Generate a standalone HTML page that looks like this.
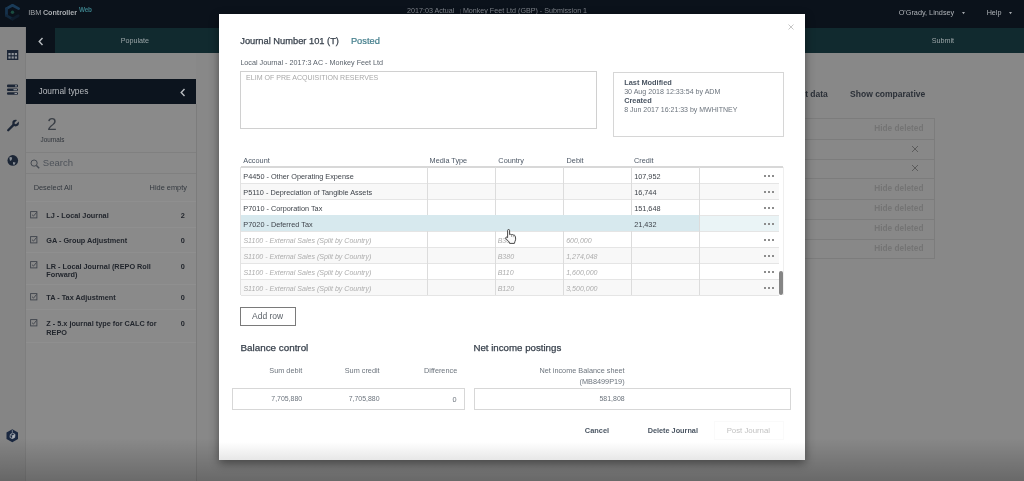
<!DOCTYPE html>
<html><head><meta charset="utf-8">
<style>
*{margin:0;padding:0;box-sizing:border-box}
#w{position:absolute;left:-6px;top:-6px;width:1036px;height:493px;background:#888888;will-change:transform}
#c{position:absolute;left:6px;top:6px;width:1024px;height:481px}
html,body{width:1024px;height:481px;overflow:hidden}
body{position:relative;background:#888888;font-family:"Liberation Sans",sans-serif}
.a{position:absolute}
.t{position:absolute;white-space:nowrap;line-height:1}
</style></head><body><div id="w"><div id="c">
<div class="a" style="left:-6px;top:-6px;width:1036px;height:33.6px;background:#0b121b"></div>
<div class="a" style="left:55px;top:27.6px;width:975px;height:25.2px;background:#112a2f"></div>
<div class="a" style="left:26px;top:27.6px;width:29px;height:25.2px;background:#0b121b"></div>
<div class="a" style="left:-6px;top:27px;width:31px;height:460px;background:#858585"></div>
<div class="a" style="left:24.5px;top:27px;width:1px;height:460px;background:#7e7e7e"></div>
<div class="a" style="left:25.5px;top:52.8px;width:170.5px;height:434.2px;background:#8a8a8a"></div>
<div class="a" style="left:195.5px;top:104px;width:1px;height:383px;background:#7c7c7c"></div>
<svg class="a" style="left:4px;top:4px" width="18" height="18" viewBox="0 0 18 18">
  <g fill="none" stroke-width="2.8" stroke-linejoin="round" stroke-linecap="round">
   <polyline points="2.5,4.6 8.5,1.2 14.6,4.6" stroke="#1a3b58"/>
   <polyline points="2.5,4.6 2.5,11.6" stroke="#16324c"/>
   <polyline points="2.5,11.6 8.5,15" stroke="#12283c"/>
   <polyline points="8.5,15 14.2,11.8" stroke="#0f1d2c"/>
  </g>
  <circle cx="8.5" cy="8.3" r="1.7" fill="#1b4c40"/>
</svg>
<div class="t" style="left:28.17px;top:8.81px;font-size:7.4px;color:#a3a6aa;font-weight:400;">IBM<b style='font-size:7.16px;margin-left:1.6px;color:#aaadb1'>Controller</b></div>
<div class="t" style="left:79.11px;top:6.86px;font-size:6.4px;color:#3a7c86;font-weight:700;letter-spacing:-0.3px">Web</div>
<div class="t" style="left:407.08px;top:8.12px;font-size:7.15px;color:#80858c;font-weight:400;">2017:03 Actual</div>
<div class="a" style="left:459.8px;top:8.5px;width:0.6px;height:7px;background:#2a3038"></div>
<div class="t" style="left:462.88px;top:8.12px;font-size:7.15px;color:#80858c;font-weight:400;">Monkey Feet Ltd (GBP) - Submission 1</div>
<div class="t" style="left:898.67px;top:8.70px;font-size:7.3px;color:#aeb2b7;font-weight:400;">O'Grady, Lindsey</div>
<div class="t" style="left:986.68px;top:8.78px;font-size:7.2px;color:#aeb2b7;font-weight:400;">Help</div>
<svg class="a" style="left:962px;top:11.5px" width="3" height="3" viewBox="0 0 3 3"><polygon points="0,0 3,0 1.5,2.2" fill="#a4a8ad"/></svg>
<svg class="a" style="left:1008.5px;top:11.5px" width="3" height="3" viewBox="0 0 3 3"><polygon points="0,0 3,0 1.5,2.2" fill="#a4a8ad"/></svg>
<svg class="a" style="left:37px;top:36.5px" width="8" height="9" viewBox="0 0 8 9"><polyline points="5.5,1 2.2,4.5 5.5,8" fill="none" stroke="#b8bcc0" stroke-width="1.4"/></svg>
<div class="t" style="left:120.68px;top:37.48px;font-size:7.2px;color:#9ba4a7;font-weight:400;">Populate</div>
<div class="t" style="left:931.68px;top:37.38px;font-size:7.2px;color:#9ba4a7;font-weight:400;">Submit</div>
<svg class="a" style="left:7px;top:50px" width="12" height="10" viewBox="0 0 12 10">
  <rect x="0" y="0" width="11.3" height="10" fill="#1c2636"/>
  <g fill="#8f949a">
   <rect x="1.4" y="3" width="2.2" height="2.2"/><rect x="4.6" y="3" width="2.2" height="2.2"/><rect x="7.8" y="3" width="2.2" height="2.2"/>
   <rect x="1.4" y="6.4" width="2.2" height="2.2"/><rect x="4.6" y="6.4" width="2.2" height="2.2"/><rect x="7.8" y="6.4" width="2.2" height="2.2"/>
  </g>
</svg>
<svg class="a" style="left:7px;top:84px" width="12" height="12" viewBox="0 0 12 12">
  <g fill="#1c2636"><rect x="0" y="0.6" width="11" height="2.6" rx="1"/><rect x="0" y="4.4" width="11" height="2.6" rx="1"/><rect x="0" y="8.2" width="11" height="2.6" rx="1"/></g>
  <g fill="#8f949a"><rect x="8" y="1.3" width="2" height="1.2"/><rect x="6.5" y="5.1" width="3.5" height="1.2"/><rect x="7.5" y="8.9" width="2.5" height="1.2"/></g>
</svg>
<svg class="a" style="left:6px;top:119px" width="14" height="13" viewBox="0 0 14 13">
  <path d="M2.2,11.2 L8,5.4" stroke="#1c2636" stroke-width="2.3" stroke-linecap="round"/>
  <circle cx="9.6" cy="4.1" r="3.3" fill="#1c2636"/>
  <path d="M9.7,4 L13.2,0.5" stroke="#858585" stroke-width="2.3" stroke-linecap="round"/>
</svg>
<svg class="a" style="left:7px;top:155px" width="12" height="12" viewBox="0 0 12 12">
  <circle cx="5.8" cy="5.4" r="5.3" fill="#1c2636"/>
  <path d="M2.3,2.6 Q4,1.3 5.2,2.8 L4.6,5 L3,6 Z" fill="#848a92"/>
  <path d="M6,7 L8.6,7.4 L7.6,9.8 L6,9.4 Z" fill="#848a92"/>
</svg>
<svg class="a" style="left:6.4px;top:428.7px" width="13" height="14" viewBox="0 0 13 14">
  <polygon points="6.3,0.2 12,3.4 12,10 6.3,13.2 0.5,10 0.5,3.4" fill="#1a2840"/>
  <path d="M6.3,1.2 L6.3,3.6" stroke="#9aa0a8" stroke-width="0.8"/>
  <polygon points="6.6,4.2 9,5.4 8.6,8.6 6.2,9.6 4,8.4 4.4,5.4" fill="none" stroke="#9aa0a8" stroke-width="0.9"/>
  <path d="M4.4,5.4 L6.6,6.6 L9,5.4 M6.6,6.6 L6.2,9.6" stroke="#9aa0a8" stroke-width="0.7" fill="none"/>
  <path d="M6.6,6.6 L9,5.4 L8.6,8.6 L6.2,9.6 Z" fill="#b0b5bb"/>
</svg>
<div class="a" style="left:26px;top:79px;width:170px;height:25px;background:#0c141e"></div>
<div class="t" style="left:38.52px;top:86.86px;font-size:8.4px;color:#b7babe;font-weight:400;">Journal types</div>
<svg class="a" style="left:179px;top:88px" width="8" height="9" viewBox="0 0 8 9"><polyline points="5.5,1 2.2,4.5 5.5,8" fill="none" stroke="#b8bcc0" stroke-width="1.4"/></svg>
<div class="t" style="left:47.23px;top:116.15px;font-size:17px;color:#3a3f46;font-weight:400;">2</div>
<div class="t" style="left:40.52px;top:137.05px;font-size:6.3px;color:#2f343b;font-weight:400;">Journals</div>
<div class="a" style="left:26px;top:152px;width:170px;height:1px;background:#808080"></div>
<svg class="a" style="left:30px;top:158.5px" width="11" height="11" viewBox="0 0 11 11"><circle cx="4.1" cy="4.1" r="3.1" fill="none" stroke="#454a52" stroke-width="1"/><path d="M6.4,6.4 L9.2,9.2" stroke="#454a52" stroke-width="1.4"/></svg>
<div class="t" style="left:42.87px;top:158.43px;font-size:9.5px;color:#4d5259;font-weight:400;">Search</div>
<div class="a" style="left:26px;top:173px;width:170px;height:1px;background:#808080"></div>
<div class="t" style="left:33.67px;top:183.71px;font-size:7.4px;color:#33383f;font-weight:400;">Deselect All</div>
<div class="t" style="left:149.57px;top:183.71px;font-size:7.4px;color:#33383f;font-weight:400;">Hide empty</div>
<div class="a" style="left:26px;top:201px;width:170px;height:1px;background:#8f8f8f"></div>
<div class="a" style="left:26px;top:227px;width:170px;height:1px;background:#8f8f8f"></div>
<div class="a" style="left:26px;top:252px;width:170px;height:1px;background:#8f8f8f"></div>
<div class="a" style="left:26px;top:284px;width:170px;height:1px;background:#8f8f8f"></div>
<div class="a" style="left:26px;top:309px;width:170px;height:1px;background:#8f8f8f"></div>
<div class="a" style="left:26px;top:342px;width:170px;height:1px;background:#8f8f8f"></div>
<svg class="a" style="left:29.5px;top:210.5px" width="8" height="8" viewBox="0 0 8 8"><rect x="0.6" y="0.6" width="6.3" height="6.3" fill="none" stroke="#3e434b" stroke-width="0.9"/><path d="M2,3.7 L3.5,5.1 L6.6,1.4" fill="none" stroke="#3e434b" stroke-width="0.9"/></svg>
<div class="t" style="left:46.27px;top:211.59px;font-size:7.3px;color:#22262d;font-weight:700;">LJ - Local Journal</div>
<div class="t" style="left:180.67px;top:211.59px;font-size:7.3px;color:#22262d;font-weight:700;">2</div>
<svg class="a" style="left:29.5px;top:235.89999999999998px" width="8" height="8" viewBox="0 0 8 8"><rect x="0.6" y="0.6" width="6.3" height="6.3" fill="none" stroke="#3e434b" stroke-width="0.9"/><path d="M2,3.7 L3.5,5.1 L6.6,1.4" fill="none" stroke="#3e434b" stroke-width="0.9"/></svg>
<div class="t" style="left:46.27px;top:236.99px;font-size:7.3px;color:#22262d;font-weight:700;">GA - Group Adjustment</div>
<div class="t" style="left:180.67px;top:236.99px;font-size:7.3px;color:#22262d;font-weight:700;">0</div>
<svg class="a" style="left:29.5px;top:261.4px" width="8" height="8" viewBox="0 0 8 8"><rect x="0.6" y="0.6" width="6.3" height="6.3" fill="none" stroke="#3e434b" stroke-width="0.9"/><path d="M2,3.7 L3.5,5.1 L6.6,1.4" fill="none" stroke="#3e434b" stroke-width="0.9"/></svg>
<div class="t" style="left:46.27px;top:262.50px;font-size:7.3px;color:#22262d;font-weight:700;">LR - Local Journal (REPO Roll</div>
<div class="t" style="left:46.27px;top:271.39px;font-size:7.3px;color:#22262d;font-weight:700;">Forward)</div>
<div class="t" style="left:180.67px;top:262.50px;font-size:7.3px;color:#22262d;font-weight:700;">0</div>
<svg class="a" style="left:29.5px;top:293.2px" width="8" height="8" viewBox="0 0 8 8"><rect x="0.6" y="0.6" width="6.3" height="6.3" fill="none" stroke="#3e434b" stroke-width="0.9"/><path d="M2,3.7 L3.5,5.1 L6.6,1.4" fill="none" stroke="#3e434b" stroke-width="0.9"/></svg>
<div class="t" style="left:46.27px;top:294.30px;font-size:7.3px;color:#22262d;font-weight:700;">TA - Tax Adjustment</div>
<div class="t" style="left:180.67px;top:294.30px;font-size:7.3px;color:#22262d;font-weight:700;">0</div>
<svg class="a" style="left:29.5px;top:319.0px" width="8" height="8" viewBox="0 0 8 8"><rect x="0.6" y="0.6" width="6.3" height="6.3" fill="none" stroke="#3e434b" stroke-width="0.9"/><path d="M2,3.7 L3.5,5.1 L6.6,1.4" fill="none" stroke="#3e434b" stroke-width="0.9"/></svg>
<div class="t" style="left:46.27px;top:320.10px;font-size:7.3px;color:#22262d;font-weight:700;">Z - 5.x journal type for CALC for</div>
<div class="t" style="left:46.27px;top:329.00px;font-size:7.3px;color:#22262d;font-weight:700;">REPO</div>
<div class="t" style="left:180.67px;top:320.10px;font-size:7.3px;color:#22262d;font-weight:700;">0</div>
<div class="t" style="left:0;width:827.80px;text-align:right;top:89.78px;font-size:8.5px;color:#2b3038;font-weight:700;">Import data</div>
<div class="t" style="left:850.12px;top:89.78px;font-size:8.5px;color:#2b3038;font-weight:700;">Show comparative</div>
<div class="a" style="left:760px;top:117.8px;width:175px;height:141.7px;border:1px solid #7c7c7c;box-sizing:border-box"></div>
<div class="a" style="left:760px;top:139px;width:175px;height:1px;background:#7c7c7c"></div>
<div class="a" style="left:760px;top:158.5px;width:175px;height:1px;background:#7c7c7c"></div>
<div class="a" style="left:760px;top:178px;width:175px;height:1px;background:#7c7c7c"></div>
<div class="a" style="left:760px;top:198.5px;width:175px;height:1px;background:#7c7c7c"></div>
<div class="a" style="left:760px;top:219px;width:175px;height:1px;background:#7c7c7c"></div>
<div class="a" style="left:760px;top:239px;width:175px;height:1px;background:#7c7c7c"></div>
<div class="t" style="left:874.23px;top:124.44px;font-size:8.3px;color:#747474;font-weight:700;">Hide deleted</div>
<div class="t" style="left:874.23px;top:183.94px;font-size:8.3px;color:#747474;font-weight:700;">Hide deleted</div>
<div class="t" style="left:874.23px;top:203.94px;font-size:8.3px;color:#747474;font-weight:700;">Hide deleted</div>
<div class="t" style="left:874.23px;top:223.94px;font-size:8.3px;color:#747474;font-weight:700;">Hide deleted</div>
<div class="t" style="left:874.23px;top:244.44px;font-size:8.3px;color:#747474;font-weight:700;">Hide deleted</div>
<svg class="a" style="left:910.5px;top:144.7px" width="8" height="8" viewBox="0 0 8 8"><path d="M1,1 L7,7 M7,1 L1,7" stroke="#505050" stroke-width="0.8"/></svg>
<svg class="a" style="left:910.5px;top:164.2px" width="8" height="8" viewBox="0 0 8 8"><path d="M1,1 L7,7 M7,1 L1,7" stroke="#505050" stroke-width="0.8"/></svg>
<div class="a" style="left:-6px;top:438px;width:1036px;height:43px;background:linear-gradient(to bottom,rgba(0,0,0,0),rgba(0,0,0,0.23))"></div>
<div class="a" style="left:-6px;top:481px;width:1036px;height:6px;background:rgba(0,0,0,0.23)"></div>
<div class="a" style="left:219px;top:14px;width:586px;height:446.2px;background:linear-gradient(to bottom,#ffffff 0,#ffffff 428px,#e7e7e7 100%);box-shadow:0 3px 9px rgba(0,0,0,0.45)"></div>
<svg class="a" style="left:788px;top:23.5px" width="6" height="6" viewBox="0 0 6 6"><path d="M0.5,0.5 L5.5,5.5 M5.5,0.5 L0.5,5.5" stroke="#c0c0c0" stroke-width="0.9"/></svg>
<div class="t" style="left:240.28px;top:37.49px;font-size:9.3px;color:#38414c;font-weight:400;-webkit-text-stroke:0.25px #38414c">Journal Number 101 (T)</div>
<div class="t" style="left:350.88px;top:37.49px;font-size:9.3px;color:#427d8b;font-weight:400;-webkit-text-stroke:0.2px #427d8b">Posted</div>
<div class="t" style="left:240.38px;top:58.58px;font-size:7.2px;color:#5b636c;font-weight:400;">Local Journal - 2017:3 AC - Monkey Feet Ltd</div>
<div class="a" style="left:240.1px;top:71.1px;width:357.2px;height:58.1px;border:1px solid #d0d0d0;box-sizing:border-box"></div>
<div class="t" style="left:246.08px;top:74.41px;font-size:7.05px;color:#a8a8a8;font-weight:400;">ELIM OF PRE ACQUISITION RESERVES</div>
<div class="a" style="left:613.1px;top:71.6px;width:170.8px;height:65px;border:1px solid #d6d6d6;box-sizing:border-box"></div>
<div class="t" style="left:624.17px;top:79.01px;font-size:7.4px;color:#4b5663;font-weight:700;">Last Modified</div>
<div class="t" style="left:624.18px;top:88.56px;font-size:7.1px;color:#6c747d;font-weight:400;">30 Aug 2018 12:33:54 by ADM</div>
<div class="t" style="left:624.17px;top:97.01px;font-size:7.4px;color:#4b5663;font-weight:700;">Created</div>
<div class="t" style="left:624.18px;top:106.25px;font-size:7.0px;color:#6c747d;font-weight:400;">8 Jun 2017 16:21:33 by MWHITNEY</div>
<div class="t" style="left:243.37px;top:156.69px;font-size:7.3px;color:#4d5866;font-weight:400;">Account</div>
<div class="t" style="left:429.57px;top:156.69px;font-size:7.3px;color:#4d5866;font-weight:400;">Media Type</div>
<div class="t" style="left:498.37px;top:156.69px;font-size:7.3px;color:#4d5866;font-weight:400;">Country</div>
<div class="t" style="left:566.57px;top:156.69px;font-size:7.3px;color:#4d5866;font-weight:400;">Debit</div>
<div class="t" style="left:634.07px;top:156.69px;font-size:7.3px;color:#4d5866;font-weight:400;">Credit</div>
<div class="a" style="left:240.7px;top:183.3px;width:538.3px;height:16px;background:#f8f8f8"></div>
<div class="a" style="left:240.7px;top:214.8px;width:458.8px;height:16.5px;background:#d7e9ee"></div>
<div class="a" style="left:699.5px;top:214.8px;width:79.5px;height:16.5px;background:#eaf4f6"></div>
<div class="a" style="left:240.7px;top:247.3px;width:538.3px;height:16px;background:#f8f8f8"></div>
<div class="a" style="left:240.7px;top:279.3px;width:538.3px;height:16px;background:#f8f8f8"></div>
<div class="a" style="left:240.7px;top:182.8px;width:538.3px;height:1px;background:#e5e5e5"></div>
<div class="a" style="left:240.7px;top:198.8px;width:538.3px;height:1px;background:#e5e5e5"></div>
<div class="a" style="left:240.7px;top:214.8px;width:538.3px;height:1px;background:#e5e5e5"></div>
<div class="a" style="left:240.7px;top:230.8px;width:538.3px;height:1px;background:#e5e5e5"></div>
<div class="a" style="left:240.7px;top:246.8px;width:538.3px;height:1px;background:#e5e5e5"></div>
<div class="a" style="left:240.7px;top:262.8px;width:538.3px;height:1px;background:#e5e5e5"></div>
<div class="a" style="left:240.7px;top:278.8px;width:538.3px;height:1px;background:#e5e5e5"></div>
<div class="a" style="left:240.7px;top:294.8px;width:538.3px;height:1px;background:#e5e5e5"></div>
<div class="a" style="left:240.7px;top:165.8px;width:542.8px;height:2px;background:#d8d8d8"></div>
<div class="a" style="left:426.5px;top:167.3px;width:1px;height:128px;background:#dcdcdc"></div>
<div class="a" style="left:494.5px;top:167.3px;width:1px;height:128px;background:#dcdcdc"></div>
<div class="a" style="left:563.0px;top:167.3px;width:1px;height:128px;background:#dcdcdc"></div>
<div class="a" style="left:631.0px;top:167.3px;width:1px;height:128px;background:#dcdcdc"></div>
<div class="a" style="left:699.0px;top:167.3px;width:1px;height:128px;background:#dcdcdc"></div>
<div class="a" style="left:240.2px;top:167.3px;width:1px;height:128px;background:#e2e2e2"></div>
<div class="a" style="left:782.8px;top:167.3px;width:1px;height:128px;background:#efefef"></div>
<div class="a" style="left:240.7px;top:215.3px;width:458.8px;height:15.5px;background:#d7e9ee"></div>
<div class="t" style="left:243.37px;top:172.59px;font-size:7.3px;color:#3f444b;font-weight:400;">P4450 - Other Operating Expense</div>
<div class="t" style="left:634.17px;top:172.59px;font-size:7.3px;color:#3f444b;font-weight:400;">107,952</div>
<div class="a" style="left:764px;top:175px;width:2px;height:2px;background:#8c8c8c"></div>
<div class="a" style="left:768px;top:175px;width:2px;height:2px;background:#8c8c8c"></div>
<div class="a" style="left:772px;top:175px;width:2px;height:2px;background:#8c8c8c"></div>
<div class="t" style="left:243.37px;top:188.59px;font-size:7.3px;color:#3f444b;font-weight:400;">P5110 - Depreciation of Tangible Assets</div>
<div class="t" style="left:634.17px;top:188.59px;font-size:7.3px;color:#3f444b;font-weight:400;">16,744</div>
<div class="a" style="left:764px;top:191px;width:2px;height:2px;background:#8c8c8c"></div>
<div class="a" style="left:768px;top:191px;width:2px;height:2px;background:#8c8c8c"></div>
<div class="a" style="left:772px;top:191px;width:2px;height:2px;background:#8c8c8c"></div>
<div class="t" style="left:243.37px;top:204.59px;font-size:7.3px;color:#3f444b;font-weight:400;">P7010 - Corporation Tax</div>
<div class="t" style="left:634.17px;top:204.59px;font-size:7.3px;color:#3f444b;font-weight:400;">151,648</div>
<div class="a" style="left:764px;top:207px;width:2px;height:2px;background:#8c8c8c"></div>
<div class="a" style="left:768px;top:207px;width:2px;height:2px;background:#8c8c8c"></div>
<div class="a" style="left:772px;top:207px;width:2px;height:2px;background:#8c8c8c"></div>
<div class="t" style="left:243.37px;top:220.59px;font-size:7.3px;color:#3f444b;font-weight:400;">P7020 - Deferred Tax</div>
<div class="t" style="left:634.17px;top:220.59px;font-size:7.3px;color:#3f444b;font-weight:400;">21,432</div>
<div class="a" style="left:764px;top:223px;width:2px;height:2px;background:#8c8c8c"></div>
<div class="a" style="left:768px;top:223px;width:2px;height:2px;background:#8c8c8c"></div>
<div class="a" style="left:772px;top:223px;width:2px;height:2px;background:#8c8c8c"></div>
<div class="t" style="left:243.38px;top:236.51px;font-size:7.05px;color:#adadad;font-weight:400;font-style:italic">S1100 - External Sales (Split by Country)</div>
<div class="t" style="left:497.68px;top:236.51px;font-size:7.05px;color:#adadad;font-weight:400;font-style:italic">B300</div>
<div class="t" style="left:566.18px;top:236.51px;font-size:7.05px;color:#adadad;font-weight:400;font-style:italic">600,000</div>
<div class="a" style="left:764px;top:239px;width:2px;height:2px;background:#8c8c8c"></div>
<div class="a" style="left:768px;top:239px;width:2px;height:2px;background:#8c8c8c"></div>
<div class="a" style="left:772px;top:239px;width:2px;height:2px;background:#8c8c8c"></div>
<div class="t" style="left:243.38px;top:252.51px;font-size:7.05px;color:#adadad;font-weight:400;font-style:italic">S1100 - External Sales (Split by Country)</div>
<div class="t" style="left:497.68px;top:252.51px;font-size:7.05px;color:#adadad;font-weight:400;font-style:italic">B380</div>
<div class="t" style="left:566.18px;top:252.51px;font-size:7.05px;color:#adadad;font-weight:400;font-style:italic">1,274,048</div>
<div class="a" style="left:764px;top:255px;width:2px;height:2px;background:#8c8c8c"></div>
<div class="a" style="left:768px;top:255px;width:2px;height:2px;background:#8c8c8c"></div>
<div class="a" style="left:772px;top:255px;width:2px;height:2px;background:#8c8c8c"></div>
<div class="t" style="left:243.38px;top:268.51px;font-size:7.05px;color:#adadad;font-weight:400;font-style:italic">S1100 - External Sales (Split by Country)</div>
<div class="t" style="left:497.68px;top:268.51px;font-size:7.05px;color:#adadad;font-weight:400;font-style:italic">B110</div>
<div class="t" style="left:566.18px;top:268.51px;font-size:7.05px;color:#adadad;font-weight:400;font-style:italic">1,600,000</div>
<div class="a" style="left:764px;top:271px;width:2px;height:2px;background:#8c8c8c"></div>
<div class="a" style="left:768px;top:271px;width:2px;height:2px;background:#8c8c8c"></div>
<div class="a" style="left:772px;top:271px;width:2px;height:2px;background:#8c8c8c"></div>
<div class="t" style="left:243.38px;top:284.51px;font-size:7.05px;color:#adadad;font-weight:400;font-style:italic">S1100 - External Sales (Split by Country)</div>
<div class="t" style="left:497.68px;top:284.51px;font-size:7.05px;color:#adadad;font-weight:400;font-style:italic">B120</div>
<div class="t" style="left:566.18px;top:284.51px;font-size:7.05px;color:#adadad;font-weight:400;font-style:italic">3,500,000</div>
<div class="a" style="left:764px;top:287px;width:2px;height:2px;background:#8c8c8c"></div>
<div class="a" style="left:768px;top:287px;width:2px;height:2px;background:#8c8c8c"></div>
<div class="a" style="left:772px;top:287px;width:2px;height:2px;background:#8c8c8c"></div>
<div class="a" style="left:779px;top:270.9px;width:4px;height:24.3px;border-radius:2px;background:#858585"></div>
<svg class="a" style="left:504px;top:229px" width="14" height="15" viewBox="0 0 14 15">
 <path d="M3.6,1.6 Q3.6,0.5 4.6,0.5 Q5.6,0.5 5.6,1.6 L5.6,5.6 Q6.6,5 7.5,5.6 Q8.5,5.2 9.3,6 Q10.3,5.8 11,6.7 L11.6,9 Q11.8,11 11,12.3 L10.4,14.4 L5.6,14.4 L5.2,13 L2,9.8 Q1.2,8.8 2,8.2 Q2.7,7.8 3.6,8.6 Z" fill="#fafafa" stroke="#333" stroke-width="0.9" stroke-linejoin="round"/>
 <path d="M7.5,5.8 L7.5,8 M9.3,6.2 L9.3,8.2" stroke="#666" stroke-width="0.5"/>
</svg>
<div class="a" style="left:240.2px;top:307.1px;width:55.6px;height:18.9px;border:1px solid #7a7a7a;box-sizing:border-box"></div>
<div class="t" style="left:252.02px;top:312.38px;font-size:8.5px;color:#5c6269;font-weight:400;">Add row</div>
<div class="t" style="left:240.46px;top:342.93px;font-size:9.85px;color:#38414c;font-weight:400;-webkit-text-stroke:0.25px #38414c">Balance control</div>
<div class="t" style="left:473.46px;top:343.25px;font-size:9.7px;color:#38414c;font-weight:400;-webkit-text-stroke:0.25px #38414c">Net income postings</div>
<div class="t" style="left:0;width:302.20px;text-align:right;top:366.80px;font-size:7.3px;color:#6c747d;font-weight:400;">Sum debit</div>
<div class="t" style="left:0;width:379.60px;text-align:right;top:366.80px;font-size:7.3px;color:#6c747d;font-weight:400;">Sum credit</div>
<div class="t" style="left:0;width:457.20px;text-align:right;top:366.80px;font-size:7.3px;color:#6c747d;font-weight:400;">Difference</div>
<div class="a" style="left:232.4px;top:387.6px;width:233.1px;height:22.1px;border:1px solid #d7d7d7;box-sizing:border-box"></div>
<div class="t" style="left:0;width:302.20px;text-align:right;top:395.99px;font-size:6.95px;color:#6c747d;font-weight:400;">7,705,880</div>
<div class="t" style="left:0;width:379.60px;text-align:right;top:395.99px;font-size:6.95px;color:#6c747d;font-weight:400;">7,705,880</div>
<div class="t" style="left:0;width:456.50px;text-align:right;top:395.69px;font-size:7.3px;color:#6c747d;font-weight:400;">0</div>
<div class="t" style="left:0;width:624.60px;text-align:right;top:366.80px;font-size:7.3px;color:#6c747d;font-weight:400;">Net income Balance sheet</div>
<div class="t" style="left:0;width:624.60px;text-align:right;top:378.30px;font-size:7.3px;color:#6c747d;font-weight:400;">(MB8499P19)</div>
<div class="a" style="left:473.9px;top:387.6px;width:317.6px;height:22.1px;border:1px solid #d7d7d7;box-sizing:border-box"></div>
<div class="t" style="left:0;width:624.60px;text-align:right;top:396.09px;font-size:6.95px;color:#6c747d;font-weight:400;">581,808</div>
<div class="t" style="left:584.87px;top:427.11px;font-size:7.4px;color:#4b5663;font-weight:700;">Cancel</div>
<div class="t" style="left:647.67px;top:427.19px;font-size:7.3px;color:#4b5663;font-weight:700;">Delete Journal</div>
<div class="a" style="left:714px;top:421px;width:69.5px;height:19px;border:1px solid #fafafa;box-sizing:border-box"></div>
<div class="t" style="left:726.65px;top:426.77px;font-size:7.8px;color:#c2c2c2;font-weight:400;">Post Journal</div>
</div></div></body></html>
